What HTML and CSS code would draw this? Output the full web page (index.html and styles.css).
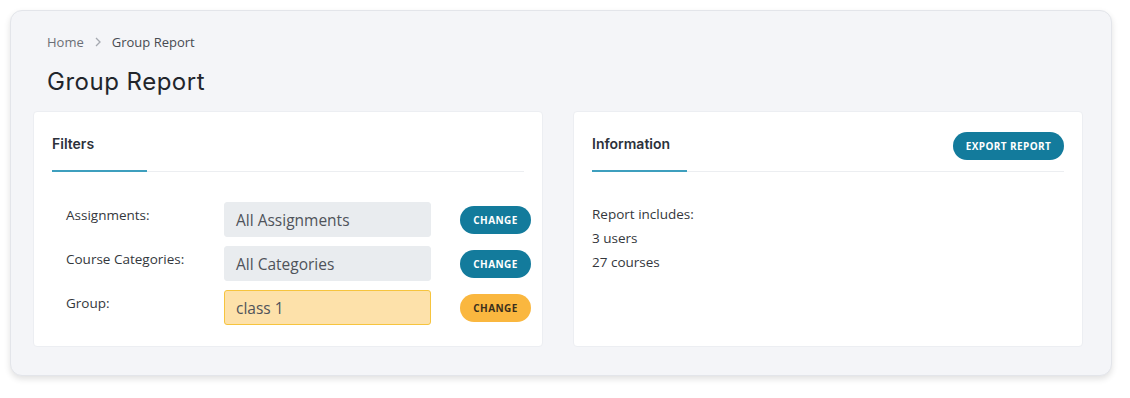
FILE: index.html
```html
<!DOCTYPE html>
<html lang="en">
<head>
    <meta charset="UTF-8">
    <meta name="viewport" content="width=device-width, initial-scale=1.0">
    <title>Group Report</title>
    <link rel="stylesheet" href="styles.css">
</head>
<body>
    <div class="frame">
        <header class="page-head">
            <nav class="crumbs">
                <span class="crumb-home">Home</span>
                <svg class="crumb-sep" width="8" height="10" viewBox="0 0 8 10"><path d="M2 1l4 4-4 4" fill="none" stroke="#a5a9b0" stroke-width="1.3"/></svg>
                <span class="crumb-current">Group Report</span>
            </nav>
            <h1 class="page-title">Group Report</h1>
        </header>
        <main class="cards">
            <section class="card">
                <div class="card-head">
                    <h2 class="card-title">Filters</h2>
                </div>
                <div class="filters">
                    <label class="filter-label">Assignments:</label>
                    <div class="filter-value">All Assignments</div>
                    <button class="btn">CHANGE</button>

                    <label class="filter-label">Course Categories:</label>
                    <div class="filter-value">All Categories</div>
                    <button class="btn">CHANGE</button>

                    <label class="filter-label">Group:</label>
                    <div class="filter-value active">class 1</div>
                    <button class="btn btn-warn">CHANGE</button>
                </div>
            </section>
            <section class="card">
                <div class="card-head">
                    <h2 class="card-title">Information</h2>
                    <button class="btn btn-export">EXPORT REPORT</button>
                </div>
                <div class="info">
                    <p>Report includes:</p>
                    <p>3 users</p>
                    <p>27 courses</p>
                </div>
            </section>
        </main>
    </div>
</body>
</html>
```

FILE: styles.css
```css
body {
    margin: 0;
    padding: 10px;
    background-color: #ffffff;
    font-family: 'Open Sans', 'Noto Sans', sans-serif;
    color: #333333;
}
.frame {
    width: 1102px;
    height: 366px;
    box-sizing: border-box;
    padding: 21px 28px 28px 22px;
    background-color: #f4f5f8;
    border: 1px solid #e3e5ea;
    border-radius: 12px;
    box-shadow: 0 3px 6px rgba(0, 0, 0, 0.12);
}
.page-head {
    padding-left: 14px;
}
.crumbs {
    display: flex;
    align-items: center;
    gap: 8px;
    font-size: 13px;
    line-height: 20px;
    height: 20px;
}
.crumb-home {
    color: #6b6f76;
}
.crumb-sep {
    margin: 0 2px;
}
.crumb-current {
    color: #474b52;
}
.page-title {
    margin: 14px 0 13px;
    font-family: 'Inter', 'Noto Sans', sans-serif;
    font-weight: 400;
    font-size: 24px;
    line-height: 32px;
    letter-spacing: 0.5px;
    color: #22252b;
}
.cards {
    display: flex;
    gap: 30px;
}
.card {
    width: 510px;
    height: 236px;
    box-sizing: border-box;
    padding: 0 18px;
    background-color: #ffffff;
    border: 1px solid #eceef2;
    border-radius: 4px;
}
.card-head {
    display: flex;
    justify-content: space-between;
    align-items: flex-start;
    border-bottom: 1px solid #eceef1;
}
.card-title {
    width: 95px;
    margin: 0 0 -1px;
    padding: 22px 0 16px;
    font-family: 'Inter', 'Noto Sans', sans-serif;
    font-weight: 600;
    font-size: 14px;
    line-height: 20px;
    color: #2c313b;
    border-bottom: 2px solid #3e9fbe;
}
.btn {
    height: 28px;
    padding: 0 14px;
    border: none;
    border-radius: 14px;
    background-color: #137b9c;
    color: #ffffff;
    font-family: 'Open Sans', 'Noto Sans', sans-serif;
    font-weight: 700;
    font-size: 10px;
    letter-spacing: 0.4px;
}
.btn-warn {
    background-color: #fab73f;
    color: #3a2f1c;
}
.btn-export {
    margin-top: 20px;
    width: 111px;
    padding: 0;
}
.filters {
    display: grid;
    grid-template-columns: 129px 207px 71px;
    grid-auto-rows: 35px;
    column-gap: 29px;
    row-gap: 9px;
    padding: 30px 0 0 14px;
}
.filter-label {
    padding-top: 3px;
    font-size: 13.5px;
    line-height: 20px;
    color: #34373c;
    white-space: nowrap;
}
.filter-value {
    display: flex;
    align-items: center;
    padding-left: 11px;
    border: 1px solid #e9ecef;
    border-radius: 3px;
    background-color: #e9ecef;
    font-size: 15.5px;
    color: #4f535a;
}
.filter-value.active {
    background-color: #fde1aa;
    border-color: #f6c43e;
}
.filters .btn {
    align-self: center;
    width: 71px;
    padding: 0;
}
.info {
    padding-top: 30px;
}
.info p {
    margin: 0;
    font-size: 13.5px;
    line-height: 24px;
    color: #34373c;
}
```
